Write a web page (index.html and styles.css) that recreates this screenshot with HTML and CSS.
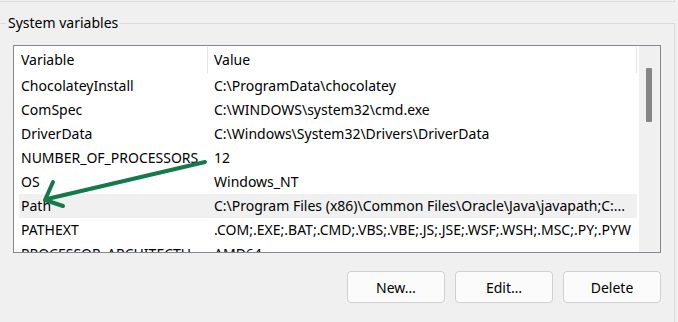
FILE: index.html
```html
<!DOCTYPE html>
<html lang="en">
<head>
  <meta charset="UTF-8">
  <title>Environment Variables</title>
  <link rel="stylesheet" href="styles.css">
</head>
<body>

  <div class="prev-group"></div>

  <fieldset class="group">
    <legend>System variables</legend>

    <div class="listbox">
      <div class="list">
        <div class="list-head">
          <div class="cell">Variable</div>
          <div class="cell">Value</div>
        </div>
        <div class="row"><div class="cell">ChocolateyInstall</div><div class="cell">C:\ProgramData\chocolatey</div></div>
        <div class="row"><div class="cell">ComSpec</div><div class="cell">C:\WINDOWS\system32\cmd.exe</div></div>
        <div class="row"><div class="cell">DriverData</div><div class="cell">C:\Windows\System32\Drivers\DriverData</div></div>
        <div class="row"><div class="cell">NUMBER_OF_PROCESSORS</div><div class="cell">12</div></div>
        <div class="row"><div class="cell">OS</div><div class="cell">Windows_NT</div></div>
        <div class="row selected"><div class="cell">Path</div><div class="cell">C:\Program Files (x86)\Common Files\Oracle\Java\javapath;C:...</div></div>
        <div class="row"><div class="cell">PATHEXT</div><div class="cell">.COM;.EXE;.BAT;.CMD;.VBS;.VBE;.JS;.JSE;.WSF;.WSH;.MSC;.PY;.PYW</div></div>
        <div class="row"><div class="cell">PROCESSOR_ARCHITECTU...</div><div class="cell">AMD64</div></div>
      </div>
      <div class="scrollbar"><div class="thumb"></div></div>
    </div>

    <div class="buttons">
      <button type="button">New…</button>
      <button type="button">Edit…</button>
      <button type="button">Delete</button>
    </div>
  </fieldset>

  <!-- annotation arrow drawn over the list -->
  <svg class="arrow" width="678" height="322" viewBox="0 0 678 322">
    <path d="M205 162 Q128 180 47 199" />
    <path d="M53 182 L45 200 L63 206" />
  </svg>

</body>
</html>
```

FILE: styles.css
```css
body {
  margin: 0;
  background: #f0f0f0;
  font-family: "Noto Sans", "Open Sans", sans-serif;
  font-size: 14px;
  color: #000;
  overflow: hidden;
  height: 322px;
  position: relative;
}

.prev-group {
  width: 675px;
  height: 2px;
  box-sizing: border-box;
  border-bottom: 1px solid #dcdcdc;
  border-right: 1px solid #dcdcdc;
}

/* group box continues below the window, so no bottom edge */
.group {
  margin: 11px 0 0 -10px;
  padding: 0 0 19px 0;
  width: 685px;
  box-sizing: border-box;
  border: 1px solid #dcdcdc;
  border-bottom: none;
  min-width: 0;
}

.group legend {
  margin-left: 15px;
  padding: 0 2px;
  line-height: 20px;
  font-size: 14px;
}

.listbox {
  margin: 12px 0 0 22px;
  width: 648px;
  height: 208px;
  box-sizing: border-box;
  border: 1px solid #828790;
  background: #fff;
  display: flex;
  overflow: hidden;
}

.list {
  width: 625px;
  padding: 0 1px 0 5px;
  box-sizing: border-box;
}

.list-head,
.row {
  display: grid;
  grid-template-columns: 189px 1fr;
  white-space: nowrap;
}

.list-head {
  height: 28px;
  align-items: center;
}

.list-head .cell {
  height: 26px;
  line-height: 26px;
  border-right: 1px solid #e5e5e5;
}

.row {
  height: 24px;
  line-height: 24px;
}

.cell {
  padding-left: 2px;
  overflow: hidden;
}

.cell + .cell {
  padding-left: 6px;
}

.row.selected {
  background: #f0f0f0;
}

.scrollbar {
  width: 21px;
  margin-left: 1px;
  background: #f0f0f0;
  padding-top: 22px;
}

.thumb {
  width: 6px;
  height: 54px;
  margin-left: 7px;
  background: #858585;
  border-radius: 1px;
}

.buttons {
  margin: 18px 0 0 22px;
  width: 648px;
  display: flex;
  justify-content: flex-end;
  gap: 10px;
}

.buttons button {
  width: 98px;
  height: 32px;
  border: 1px solid #d0d0d0;
  border-radius: 4px;
  background: #fbfbfb;
  font-family: "Noto Sans", "Open Sans", sans-serif;
  font-size: 14px;
  color: #000;
  padding: 0;
}

.arrow {
  position: absolute;
  left: 0;
  top: 0;
  pointer-events: none;
}

.arrow path {
  fill: none;
  stroke: #137a4c;
  stroke-width: 4;
  stroke-linecap: round;
  stroke-linejoin: round;
}
```
